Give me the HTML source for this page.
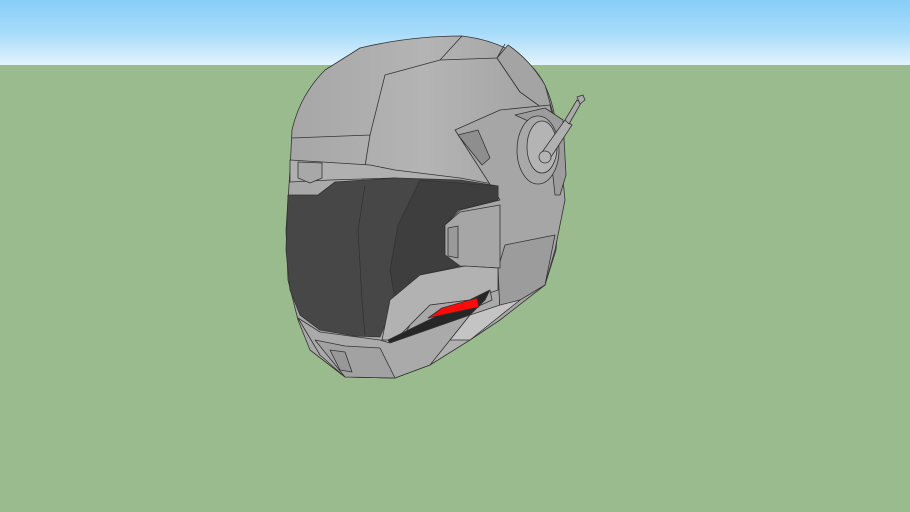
<!DOCTYPE html>
<html><head><meta charset="utf-8"><style>
html,body{margin:0;padding:0;width:910px;height:512px;overflow:hidden}
svg{display:block}
</style></head><body>
<svg width="910" height="512" viewBox="0 0 910 512" xmlns="http://www.w3.org/2000/svg">
<defs>
<linearGradient id="sky" x1="0" y1="0" x2="0" y2="1">
<stop offset="0" stop-color="#88cef8"/><stop offset="0.5" stop-color="#a6dbfa"/><stop offset="1" stop-color="#e2f3fd"/>
</linearGradient>
<linearGradient id="dome" x1="0" y1="0" x2="1" y2="0">
<stop offset="0" stop-color="#a6a6a6"/><stop offset="0.5" stop-color="#b4b4b4"/><stop offset="1" stop-color="#a0a0a0"/>
</linearGradient>
</defs>
<rect x="0" y="0" width="910" height="65" fill="url(#sky)"/>
<rect x="0" y="65" width="910" height="447" fill="#9abb8e"/>
<g stroke="#333" stroke-width="0.8" stroke-linejoin="round">
<path d="M360,48 Q410,36 462,36 Q510,42 535,70 Q552,90 557,130 L563,170 L560,200 L556,250 L545,285 L500,320 L470,340 L430,365 L395,378 L345,377 L310,350 L298,320 L288,280 L286,230 L290,170 L292,130 Q300,95 325,70 Z" fill="url(#dome)"/>
<path d="M292,138 L370,135 L362,185 M370,135 L385,75 L440,60 L497,58 L520,92 M440,60 L462,36 M497,58 L505,44" fill="none"/>
<path d="M497,58 L508,45 Q530,60 545,85 L557,128 L545,110 L520,92 Z" fill="#a4a4a4"/>
<path d="M290,160 L370,165 L395,170 L460,178 L498,185 L498,192 L395,178 L330,180 L290,182 Z" fill="#b0b0b0"/>
<path d="M298,162 L322,163 L322,178 L310,183 L298,178 Z" fill="#a8a8a8"/>
<path d="M455,130 L500,110 L550,105 L560,150 L565,200 L555,250 L545,285 L500,310 L498,268 L460,265 L445,250 L445,225 L460,210 L500,200 Z" fill="#a6a6a6"/>
<path d="M458,135 L478,130 L490,158 L482,165 Z" fill="#8e8e8e"/>
<path d="M505,245 L555,235 L545,285 L500,312 L498,268 Z" fill="#9c9c9c"/>
<path d="M515,115 L545,108 L563,120 L566,175 L560,195 L555,195 L548,130 Z" fill="#9c9c9c"/>
<ellipse cx="538" cy="150" rx="21" ry="34" fill="#a8a8a8"/>
<ellipse cx="542" cy="147" rx="15" ry="26" fill="#b4b4b4"/>
<path d="M540,155 L565,120 L572,125 L549,160 Z" fill="#b0b0b0"/>
<circle cx="545" cy="157" r="6" fill="#b4b4b4"/>
<path d="M565,120 L577,100 L581,103 L569,124 Z" fill="#aaa"/>
<path d="M577,97 L583,95 L585,100 L580,104 Z" fill="#aaa"/>
<path d="M288,195 L318,195 L335,182 L395,178 L460,180 L498,186 L498,200 L458,210 L445,225 L445,255 L460,266 L420,275 L395,300 L380,337 L355,336 L320,330 L300,315 L290,290 L286,250 Z" fill="#474747"/>
<path d="M365,185 L358,230 L362,300 L365,335" fill="none"/>
<path d="M420,180 L498,186 L498,200 L458,210 L445,225 L445,255 L460,266 L420,275 L395,300 L390,270 L398,225 Z" fill="#3e3e3e"/>
<path d="M445,225 L460,212 L500,205 L500,268 L460,266 L445,255 Z" fill="#a6a6a6"/>
<path d="M448,228 L458,226 L458,258 L448,256 Z" fill="#9a9a9a"/>
<path d="M390,300 L420,275 L465,266 L498,268 L498,290 L470,300 L430,305 L410,325 L395,340 L382,340 Z" fill="#b2b2b2"/>
<path d="M410,325 L430,305 L470,300 L490,290 L492,300 L400,342 Z" fill="#a8a8a8"/>
<path d="M388,340 L490,290 L485,300 L470,315 L390,343 Z" fill="#262626"/>
<path d="M428,318 L442,308 L477,298 L479,307 Z" fill="#ff0a0a"/>
<path d="M298,318 L320,332 L380,340 L390,343 L470,315 L450,340 L430,365 L395,378 L345,377 L320,355 Z" fill="#aaaaaa"/>
<path d="M315,340 L345,346 L380,348 L395,378 L345,377 Z" fill="#a2a2a2"/>
<path d="M330,350 L345,352 L352,372 L340,370 Z" fill="#989898"/>
<path d="M470,315 L500,305 L520,300 L470,340 L450,340 Z" fill="#c4c4c4"/>
</g>
</svg>
</body></html>
